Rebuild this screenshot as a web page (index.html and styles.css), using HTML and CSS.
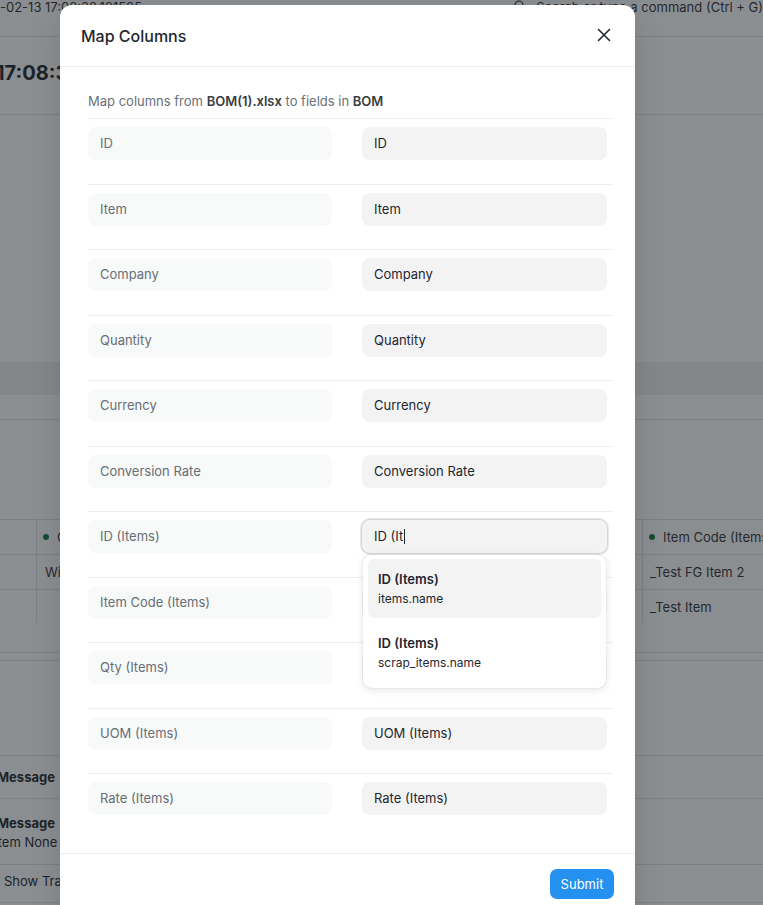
FILE: index.html
```html
<!DOCTYPE html>
<html lang="en">
<head>
<meta charset="utf-8">
<title>Map Columns</title>
<link rel="stylesheet" href="styles.css">
</head>
<body>
<div class="page">
  <header class="navbar">
    <span class="nav-time">-02-13 17:08:38.101585</span>
    <span class="nav-search">
      <svg class="search-icon" width="12" height="12" viewBox="0 0 12 12"><circle cx="5" cy="5" r="4" fill="none" stroke="#333" stroke-width="1.2"/><path d="M8 8l3 3" stroke="#333" stroke-width="1.2"/></svg>
      Search or type a command (Ctrl + G)
    </span>
  </header>
  <div class="page-head"><h1 class="page-title">17:08:38.101585</h1></div>
  <div class="gap-a"></div>
  <div class="band"></div>
  <div class="gap-b"></div>
  <div class="gap-c"></div>
  <div class="bg-table">
    <div class="trow thead">
      <div class="tc c1"></div>
      <div class="tc c2"><span class="dot"></span>Column</div>
      <div class="tc c3"><span class="dot"></span>Item Code (Items)</div>
    </div>
    <div class="trow">
      <div class="tc c1 clip">n</div>
      <div class="tc c2">Wi</div>
      <div class="tc c3">_Test FG Item 2</div>
    </div>
    <div class="trow">
      <div class="tc c1"></div>
      <div class="tc c2"></div>
      <div class="tc c3">_Test Item</div>
    </div>
  </div>
  <div class="gap-d"></div>
  <div class="gap-e"></div>
  <div class="msg-row"><b class="msg-title">Message</b></div>
  <div class="msg-row2"><b class="msg-title">Message</b><span class="msg-text">Item None</span></div>
  <div class="trace-row">Show Traceback</div>
</div>

<div class="backdrop"></div>

<div class="modal">
  <div class="modal-header">
    <h2 class="modal-title">Map Columns</h2>
    <svg class="close-icon" width="16" height="16" viewBox="0 0 16 16"><path d="M2.5 2.5L13.5 13.5M13.5 2.5L2.5 13.5" stroke="#1f272e" stroke-width="1.6" stroke-linecap="round"/></svg>
  </div>
  <div class="modal-body">
    <p class="desc">Map columns from <b>BOM(1).xlsx</b> to fields in <b>BOM</b></p>
    <div class="map-row"><div class="field src">ID</div><div class="cell"><div class="field dst">ID</div></div></div>
    <div class="map-row"><div class="field src">Item</div><div class="cell"><div class="field dst">Item</div></div></div>
    <div class="map-row"><div class="field src">Company</div><div class="cell"><div class="field dst">Company</div></div></div>
    <div class="map-row"><div class="field src">Quantity</div><div class="cell"><div class="field dst">Quantity</div></div></div>
    <div class="map-row"><div class="field src">Currency</div><div class="cell"><div class="field dst">Currency</div></div></div>
    <div class="map-row"><div class="field src">Conversion Rate</div><div class="cell"><div class="field dst">Conversion Rate</div></div></div>
    <div class="map-row"><div class="field src">ID (Items)</div>
      <div class="cell">
        <div class="field dst focus">ID (It<span class="caret"></span></div>
        <div class="dropdown">
          <div class="dd-item active"><div class="dd-label">ID (Items)</div><div class="dd-value">items.name</div></div>
          <div class="dd-item"><div class="dd-label">ID (Items)</div><div class="dd-value">scrap_items.name</div></div>
        </div>
      </div>
    </div>
    <div class="map-row"><div class="field src">Item Code (Items)</div><div class="cell"><div class="field dst">Item Code (Items)</div></div></div>
    <div class="map-row"><div class="field src">Qty (Items)</div><div class="cell"><div class="field dst">Qty (Items)</div></div></div>
    <div class="map-row"><div class="field src">UOM (Items)</div><div class="cell"><div class="field dst">UOM (Items)</div></div></div>
    <div class="map-row"><div class="field src">Rate (Items)</div><div class="cell"><div class="field dst">Rate (Items)</div></div></div>
  </div>
  <div class="modal-footer">
    <button class="btn-primary">Submit</button>
  </div>
</div>
</body>
</html>
```
FILE: styles.css
```css
* { box-sizing: border-box; }
html, body { margin: 0; padding: 0; }
body {
  width: 763px;
  height: 905px;
  overflow: hidden;
  position: relative;
  font-family: Inter, "Noto Sans", sans-serif;
  font-size: 13px;
  color: #1f272e;
  background: #fff;
}

/* background page */
.page { width: 763px; }
.navbar {
  height: 37px;
  border-bottom: 1px solid #e2e2e2;
  display: flex;
  justify-content: space-between;
  align-items: flex-start;
  font-size: 13px;
  line-height: 14px;
  color: #333;
  background: #fff;
}
.nav-search { display: flex; align-items: flex-start; gap: 10px; white-space: nowrap; }
.page-head {
  height: 78px;
  border-bottom: 1px solid #e2e2e2;
  overflow: hidden;
}
.page-title {
  margin: 23px 0 0 -4px;
  font-size: 20px;
  line-height: 26px;
  font-weight: 700;
  color: #1f272e;
  white-space: nowrap;
}
.gap-a { height: 247px; }
.band { height: 33px; background: #f0f0f0; }
.gap-b { height: 25px; border-bottom: 1px solid #e2e2e2; }
.gap-c { height: 99px; }
.bg-table { border-top: 1px solid #e2e2e2; }
.trow { display: flex; height: 35px; border-bottom: 1px solid #e2e2e2; }
.trow:last-child { border-bottom: none; height: 33px; }
.tc { display: flex; align-items: center; padding-left: 8px; color: #333; white-space: nowrap; overflow: hidden; }
.c1 { width: 37px; border-right: 1px solid #e2e2e2; padding-left: 0; }
.clip { text-indent: -30px; }
.c2 { width: 606px; border-right: 1px solid #e2e2e2; }
.c3 { flex: 1; padding-left: 7px; }
.thead .tc { padding-left: 6px; }
.dot { width: 6px; height: 6px; border-radius: 50%; background: #137d3e; margin-right: 8px; flex: none; }
.gap-d { height: 30px; border-bottom: 1px solid #e2e2e2; }
.gap-e { height: 8px; border-bottom: 1px solid #e2e2e2; }
.msg-title { margin-left: -3px; }
.msg-row {
  margin-top: 94px;
  height: 44px;
  border-top: 1px solid #e2e2e2;
  border-bottom: 1px solid #e2e2e2;
  display: flex; align-items: center;
  color: #1f272e;
}
.msg-row2 {
  height: 66px;
  border-bottom: 1px solid #e2e2e2;
  display: flex; flex-direction: column; justify-content: center; align-items: flex-start;
  line-height: 19px;
  color: #1f272e;
  padding-top: 2px;
}
.msg-text { margin-left: -6px; }
.trace-row {
  height: 38px;
  border-bottom: 1px solid #e2e2e2;
  display: flex; align-items: center;
  padding: 0 0 6px 4px;
  color: #1f272e;
}

.backdrop {
  position: absolute;
  inset: 0;
  background: rgba(24, 30, 36, 0.5);
}

/* modal */
.modal {
  position: absolute;
  left: 60px;
  top: 5px;
  width: 575px;
  background: #fff;
  border-radius: 12px;
  box-shadow: 0 10px 30px rgba(0,0,0,0.12);
}
.modal-header {
  height: 62px;
  padding: 0 23px 0 21px;
  display: flex;
  align-items: center;
  justify-content: space-between;
  border-bottom: 1px solid #ededed;
}
.modal-title {
  margin: 0;
  font-size: 16px;
  font-weight: 500;
  color: #1f272e;
}
.close-icon { display: block; margin-top: -2px; }
.modal-body { padding: 24px 22px 14.5px 28px; }
.desc {
  margin: 0 0 7px;
  font-size: 13px;
  line-height: 20px;
  color: #6b7077;
}
.desc b { color: #383d42; font-weight: 600; }
.map-row {
  height: 65.5px;
  border-top: 1px solid #ededed;
  padding-top: 8px;
  display: grid;
  grid-template-columns: 244px 245px;
  column-gap: 30px;
  align-items: start;
}
.cell { position: relative; }
.field {
  height: 33px;
  border-radius: 8px;
  padding: 0 12px 1px;
  display: flex;
  align-items: center;
  font-size: 13px;
  white-space: nowrap;
}
.field.src { background: #f8f9f9; color: #676e75; }
.field.dst { background: #f3f3f4; color: #1f272e; }
.field.focus {
  box-shadow: 0 0 0 1px #d4d7da, 0 0 0 2px #e6e8ea;
}
.caret { display: inline-block; width: 1px; height: 15px; background: #1f272e; margin-left: 1px; }
.dropdown {
  position: absolute;
  top: 35px;
  left: 1px;
  width: 243px;
  padding: 4px 5px 6px;
  background: #fff;
  border-radius: 8px;
  box-shadow: 0 0 1px rgba(0,0,0,0.25), 0 2px 8px rgba(0,0,0,0.1);
  z-index: 5;
}
.dd-item {
  padding: 10px 10px 9px;
  border-radius: 6px;
  line-height: 20px;
  font-size: 13px;
}
.dd-item + .dd-item { margin-top: 5px; }
.dd-item.active { background: #f3f3f4; }
.dd-label { font-weight: 600; color: #1f272e; }
.dd-value { color: #1f272e; font-size: 12px; }
.modal-footer {
  border-top: 1px solid #ededed;
  padding: 15px 21px 30px;
  display: flex;
  justify-content: flex-end;
}
.btn-primary {
  width: 64px;
  height: 30px;
  border: none;
  border-radius: 7px;
  background: #2490ef;
  color: #fff;
  font-family: Inter, "Noto Sans", sans-serif;
  font-size: 13px;
  padding: 0;
}
```
